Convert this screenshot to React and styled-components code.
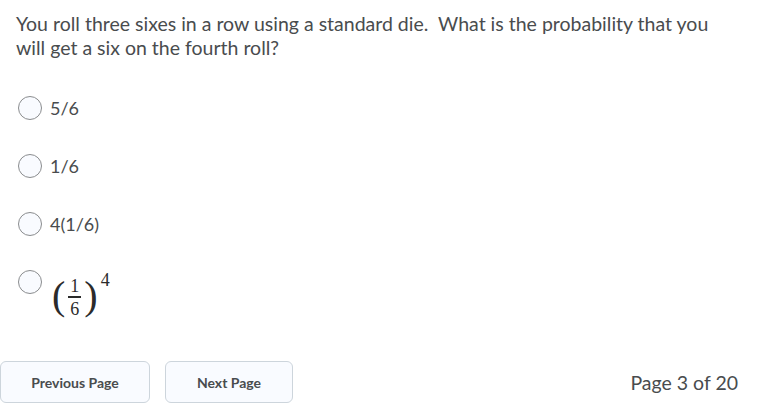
import React from 'react';
import styled, { createGlobalStyle } from 'styled-components';

const Global = createGlobalStyle`
  body {
    margin: 0;
    background: #ffffff;
    font-family: Lato, "Noto Sans", sans-serif;
    color: #494c4e;
  }
`;

const Page = styled.div`
  width: 765px;
  height: 416px;
  display: flex;
  flex-direction: column;
`;

const Question = styled.div`
  padding: 12px 16px 0 16px;
  font-size: 19.5px;
  line-height: 24px;
  max-width: 715px;
`;

const Options = styled.div`
  display: flex;
  flex-direction: column;
  gap: 34px;
  padding: 36px 0 0 18px;
`;

const Option = styled.label`
  display: flex;
  align-items: ${p => (p.$math ? 'flex-start' : 'center')};
  gap: 8px;
  font-size: 18px;
  height: 24px;
`;

const Radio = styled.span`
  width: 22px;
  height: 22px;
  border-radius: 50%;
  border: 1px solid #8a8c8e;
  background: #f9fbff;
  flex: none;
`;

const Formula = styled.span`
  font-family: "Liberation Serif", "DejaVu Serif", serif;
  display: inline-flex;
  align-items: center;
  color: #2b2b2b;
  margin-top: 4px;
  margin-left: 2px;
`;

const Paren = styled.span`
  font-size: 40px;
  line-height: 44px;
`;

const Frac = styled.span`
  display: inline-flex;
  flex-direction: column;
  align-items: center;
  font-size: 18px;
  line-height: 15px;
  padding: 3px 3px 0;
`;

const Num = styled.span`
  border-bottom: 2px solid #2b2b2b;
  padding: 0 2px 2px;
  margin-bottom: 4px;
`;

const Sup = styled.span`
  font-size: 18px;
  line-height: 18px;
  align-self: flex-start;
  margin-top: -3px;
  margin-left: 3px;
`;

const Footer = styled.div`
  margin-top: auto;
  margin-bottom: 13px;
  display: flex;
  align-items: center;
  gap: 15px;
  padding-right: 27px;
`;

const Button = styled.button`
  height: 42px;
  min-width: ${p => p.$w}px;
  border: 1px solid #cdd5dc;
  border-radius: 6px;
  background: #f9fbff;
  font-family: Lato, "Noto Sans", sans-serif;
  font-weight: 700;
  font-size: 14px;
  color: #494c4e;
  padding: 0 16px;
`;

const PageCount = styled.span`
  margin-left: auto;
  font-size: 19.5px;
`;

export default function App() {
  return (
    <Page>
      <Global />
      <Question>
        You roll three sixes in a row using a standard die.&nbsp; What is the probability that you will get a six on the fourth roll?
      </Question>
      <Options>
        <Option><Radio />5/6</Option>
        <Option><Radio />1/6</Option>
        <Option><Radio />4(1/6)</Option>
        <Option $math>
          <Radio />
          <Formula>
            <Paren>(</Paren>
            <Frac><Num>1</Num><span>6</span></Frac>
            <Paren>)</Paren>
            <Sup>4</Sup>
          </Formula>
        </Option>
      </Options>
      <Footer>
        <Button $w={150}>Previous Page</Button>
        <Button $w={128}>Next Page</Button>
        <PageCount>Page 3 of 20</PageCount>
      </Footer>
    </Page>
  );
}
